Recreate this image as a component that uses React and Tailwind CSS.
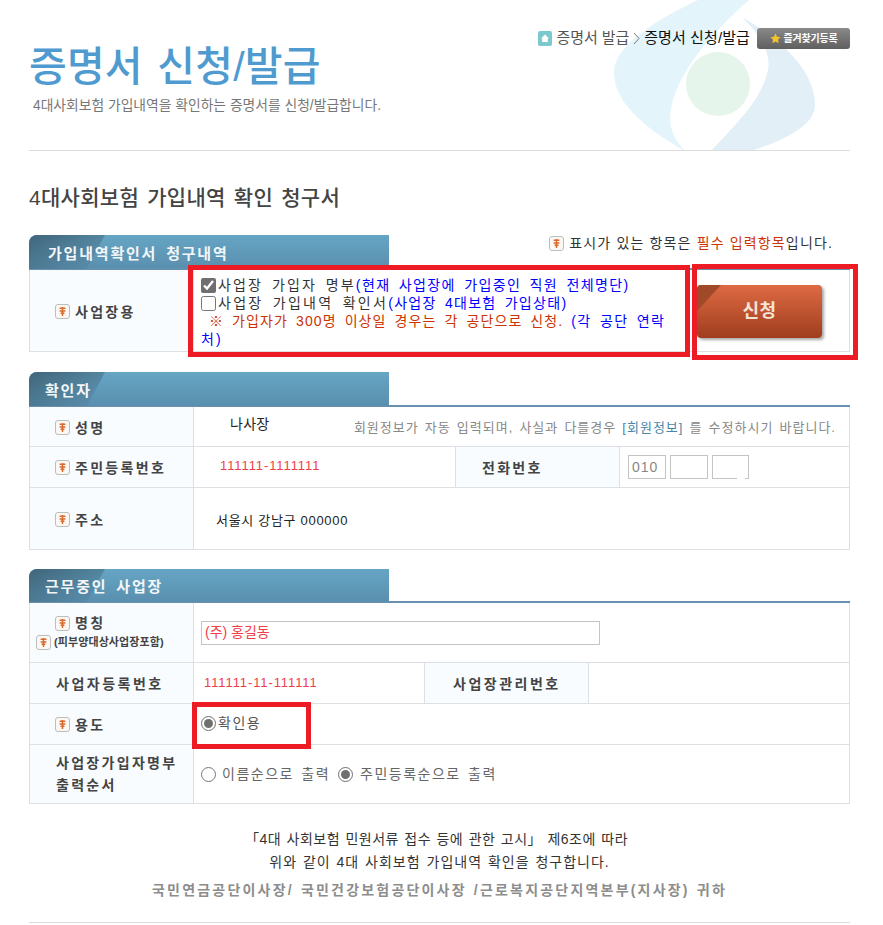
import React from "react";

function Req({ className = "" }) {
  return (
    <svg width="15" height="15" viewBox="0 0 15 15" className={`shrink-0 ${className}`}>
      <rect x="0.5" y="0.5" width="14" height="14" rx="2.5" fill="#fbf8f4" stroke="#bdbdbd" />
      <path d="M4.6 4.2 L10.4 4.2 M4.6 7 L10.4 7 M7.5 3 L7.5 12 M5.6 9.2 L9.4 9.2" stroke="#d8682c" strokeWidth="1.5" fill="none" />
    </svg>
  );
}

function Tab({ children, pl = "pl-[16px]", h = "h-[34px]" }) {
  return (
    <div className="border-b-2 border-[#6b8fae]">
      <div className={`relative w-[360px] -mb-[1px] rounded-tl-lg overflow-hidden bg-linear-to-b from-[#66a5c4] to-[#5a8fae] flex items-center pt-[4px] ${h} ${pl}`}>
        <div className="absolute left-0 top-0 w-[76px] h-full bg-linear-to-br from-[#3f6479] to-transparent [clip-path:polygon(0_0,100%_0,76%_100%,0_100%)]" />
        <span className="relative text-[15px] font-bold tracking-[1.8px] [word-spacing:3px] text-[#f2f6f8]">{children}</span>
      </div>
    </div>
  );
}

function Label({ children, req, className = "" }) {
  return (
    <div className={`bg-[#f8fcff] flex items-center pl-[25px] gap-[5px] text-[14px] font-bold tracking-[2.3px] text-[#444] ${className}`}>
      {req && <Req className="-mt-[2px]" />}
      <span>{children}</span>
    </div>
  );
}

function Radio({ checked }) {
  return <input type="radio" readOnly checked={checked} className="w-[15px] h-[15px] m-0 shrink-0 accent-[#6f6f6f]" />;
}

export default function App() {
  return (
    <div className="relative w-[883px] h-[925px] overflow-hidden bg-white pl-[29px] font-['Liberation_Sans','Noto_Sans_CJK_KR',sans-serif] text-[#333]">
      {/* watermark */}
      <svg className="absolute left-[600px] top-0" width="230" height="150" viewBox="600 0 230 150">
        <path d="M698 0 L749 0 C715 30 672 75 670 118 C670 130 676 142 684 150 L683 150 C640 125 614 100 614 72 C614 45 660 18 698 0 Z" fill="#e3f4fb" />
        <path d="M742 17 C790 45 815 75 815 105 C815 125 785 140 754 150 L712 150 C735 125 762 100 768 70 C772 50 755 30 742 17 Z" fill="#e2eff7" />
        <circle cx="718" cy="84" r="32" fill="#e6f5ec" />
      </svg>

      <div className="relative w-[821px]">
        <header className="h-[151px] border-b border-[#dcdcdc] flex justify-between">
          <div>
            <h1 className="mt-[39px] text-[41px] leading-[56px] font-medium text-[#4f9bd0] tracking-[0.2px] [word-spacing:3px] whitespace-nowrap">증명서 신청/발급</h1>
            <p className="mt-[2px] ml-[4px] text-[13.8px] leading-[18px] tracking-[0px] text-[#777] whitespace-nowrap">4대사회보험 가입내역을 확인하는 증명서를 신청/발급합니다.</p>
          </div>
          <div className="mt-[28px] h-[21px] flex items-center">
            <svg width="14" height="15" viewBox="0 0 14 15" className="mr-[5px]">
              <rect width="14" height="15" rx="2" fill="#7cc8cf" />
              <path d="M7 3.5 L11 7.5 L9.8 7.5 L9.8 11 L4.2 11 L4.2 7.5 L3 7.5 Z" fill="#fff" />
            </svg>
            <span className="text-[15px] text-[#555] tracking-[-0.1px]">증명서 발급</span>
            <svg width="7" height="13" viewBox="0 0 7 13" className="mx-[4px]"><path d="M1 1 L6 6.5 L1 12" fill="none" stroke="#777" /></svg>
            <span className="text-[15px] text-[#111] tracking-[0.1px]">증명서 신청/발급</span>
            <span className="ml-[7px] w-[93px] h-[21px] rounded-[3px] bg-linear-to-b from-[#8a8a8a] to-[#5f5f5f] flex items-center justify-center gap-[3px] text-[10px] font-bold text-white tracking-[-0.2px]">
              <svg width="11" height="11" viewBox="0 0 24 24"><path d="M12 1 L15.4 8.3 L23 9.3 L17.4 14.7 L18.9 22.5 L12 18.6 L5.1 22.5 L6.6 14.7 L1 9.3 L8.6 8.3 Z" fill="#f3c22c" /></svg>
              즐겨찾기등록
            </span>
          </div>
        </header>

        <h2 className="mt-[32px] text-[21px] leading-[30px] font-medium text-[#444] tracking-[0.3px] [word-spacing:2px]">4대사회보험 가입내역 확인 청구서</h2>

        {/* section 1 */}
        <div className="mt-[22px] relative">
          <div className="absolute right-[17px] top-0 flex items-center gap-[5px] text-[14px] leading-[16px] tracking-[1.15px] text-[#333]">
            <Req />
            <span>표시가 있는 항목은 <span className="text-[#cc3300]">필수 입력항목</span>입니다.</span>
          </div>
          <Tab pl="pl-[19px]">가입내역확인서 청구내역</Tab>
          <div className="grid grid-cols-[164px_499px_1fr] h-[82px] border-x border-b border-[#dcdfe4]">
            <Label req className="border-r border-[#dcdfe4] pt-[4px]">사업장용</Label>
            <div className="pl-[7px] pt-[6px] text-[14px] leading-[18px] tracking-[2.1px] [word-spacing:3px] whitespace-nowrap text-[#333]">
              <div className="flex items-center h-[18px]"><input type="checkbox" readOnly checked className="w-[15px] h-[15px] m-0 mr-[2px] accent-[#6f6f6f]" /><span>사업장 가입자 명부<span className="text-[#0000ff] tracking-[1.4px]">(현재 사업장에 가입중인 직원 전체명단)</span></span></div>
              <div className="flex items-center h-[18px]"><input type="checkbox" readOnly className="w-[15px] h-[15px] m-0 mr-[2px] accent-[#6f6f6f]" /><span className="tracking-[2.3px]">사업장 가입내역 확인서<span className="text-[#0000ff] tracking-[1.3px]">(사업장 4대보험 가입상태)</span></span></div>
              <div className="pl-[8px] text-[#cc3300] tracking-[1.1px]">※ 가입자가 300명 이상일 경우는 각 공단으로 신청. <span className="text-[#0000ff] tracking-[1.4px]">(각 공단 연락</span></div>
              <div className="text-[#0000ff]">처)</div>
            </div>
            <div className="pl-[4px] pt-[15px]">
              <button className="relative w-[125px] h-[53px] rounded-[4px] overflow-hidden bg-linear-to-b from-[#de6a43] to-[#9f3e1e] shadow-[2px_2px_3px_rgba(0,0,0,0.35)] text-[18px] font-bold text-[#f5e3d6] tracking-[0.5px]">
                <span className="absolute left-0 top-0 w-[24px] h-[26px] bg-[#a04a2a] [clip-path:polygon(0_0,100%_0,0_100%)]" />
                <span className="relative">신청</span>
              </button>
            </div>
          </div>
        </div>

        {/* section 2 */}
        <div className="mt-[20px]">
          <Tab>확인자</Tab>
          <div className="border-x border-b border-[#dcdfe4]">
            <div className="grid grid-cols-[164px_1fr] h-[40px] border-b border-[#dcdfe4]">
              <Label req className="border-r border-[#dcdfe4] pt-[3px]">성명</Label>
              <div className="relative flex items-center pl-[36px] pr-[13px] justify-between whitespace-nowrap">
                <span className="text-[14px] tracking-[0.3px] text-[#222] -mt-[4px]">나사장</span>
                <span className="text-[13px] tracking-[1px] [word-spacing:1.5px] text-[#888] pt-[2px]">회원정보가 자동 입력되며, 사실과 다를경우 <span className="text-[#4a86a8]">[회원정보]</span> 를 수정하시기 바랍니다.</span>
              </div>
            </div>
            <div className="grid grid-cols-[164px_262px_164px_1fr] h-[41px] border-b border-[#dcdfe4]">
              <Label req className="border-r border-[#dcdfe4] pt-[2px]">주민등록번호</Label>
              <div className="flex items-center pl-[26px] pb-[2px] text-[13px] tracking-[0.9px] text-[#ef3e4a] border-r border-[#dcdfe4]">111111-1111111</div>
              <div className="bg-[#f8fcff] border-r border-[#dcdfe4] flex items-center pl-[26px] pt-[2px] text-[14px] font-bold tracking-[2.3px] text-[#444]">전화번호</div>
              <div className="flex items-center pl-[8px] gap-[4px] text-[14px] tracking-[1px] text-[#888]">
                <div className="w-[38px] h-[24px] border border-[#c4c4c4] flex items-center pl-[3px]">010</div>
                <div className="w-[38px] h-[24px] border border-[#c4c4c4]" />
                <div className="relative w-[37px] h-[24px] border border-[#c4c4c4]">
                  <span className="absolute right-[3px] -bottom-[1px] w-[8px] h-[1px] bg-white" />
                </div>
              </div>
            </div>
            <div className="grid grid-cols-[164px_1fr] h-[61px]">
              <Label req className="border-r border-[#dcdfe4] pt-[4px]">주소</Label>
              <div className="flex items-center pl-[22px] pt-[5px] text-[13px] tracking-[0.7px] text-[#222]">서울시 강남구 000000</div>
            </div>
          </div>
        </div>

        {/* section 3 */}
        <div className="mt-[19px]">
          <Tab h="h-[33px]">근무중인 사업장</Tab>
          <div className="border-x border-b border-[#dcdfe4]">
            <div className="grid grid-cols-[164px_1fr] h-[60px] border-b border-[#dcdfe4]">
              <div className="bg-[#f8fcff] border-r border-[#dcdfe4] flex flex-col justify-center pl-[6px] text-[#444] font-bold">
                <div className="flex items-center gap-[5px] pl-[19px] text-[14px] tracking-[2.3px] h-[20px]"><Req />명칭</div>
                <div className="flex items-center gap-[3px] text-[11px] tracking-[0.1px] h-[18px] whitespace-nowrap"><Req />(피부양대상사업장포함)</div>
              </div>
              <div className="flex items-center pl-[7px]">
                <div className="w-[399px] h-[24px] border border-[#c4c4c4] flex items-center pl-[3px] text-[14px] text-[#ef3e4a]">(주) 홍길동</div>
              </div>
            </div>
            <div className="grid grid-cols-[164px_231px_164px_1fr] h-[41px] border-b border-[#dcdfe4]">
              <div className="bg-[#f8fcff] border-r border-[#dcdfe4] flex items-center pl-[26px] pt-[2px] text-[14px] font-bold tracking-[2.5px] text-[#444]">사업자등록번호</div>
              <div className="flex items-center pl-[10px] text-[13px] tracking-[0.9px] text-[#ef3e4a] border-r border-[#dcdfe4] -mt-[1px]">111111-11-111111</div>
              <div className="bg-[#f8fcff] border-r border-[#dcdfe4] flex items-center pl-[28px] pt-[2px] text-[14px] font-bold tracking-[2.5px] text-[#444]">사업장관리번호</div>
              <div />
            </div>
            <div className="grid grid-cols-[164px_1fr] h-[41px] border-b border-[#dcdfe4]">
              <Label req className="border-r border-[#dcdfe4] pt-[2px]">용도</Label>
              <div className="flex items-center pl-[7px] gap-[2px] text-[14px] tracking-[1.5px] text-[#555] -mt-[2px]"><Radio checked />확인용</div>
            </div>
            <div className="grid grid-cols-[164px_1fr] h-[58px]">
              <div className="bg-[#f8fcff] border-r border-[#dcdfe4] flex items-center pl-[26px] text-[14px] leading-[22px] font-bold tracking-[2.3px] text-[#444]"><span>사업장가입자명부<br />출력순서</span></div>
              <div className="flex items-center pl-[7px] text-[14px] tracking-[1.5px] [word-spacing:2px] text-[#666]">
                <Radio /><span className="ml-[6px]">이름순으로 출력</span>
                <span className="ml-[8px] flex items-center"><Radio checked /><span className="ml-[7px]">주민등록순으로 출력</span></span>
              </div>
            </div>
          </div>
        </div>

        {/* footer text */}
        <div className="mt-[24px] text-center text-[14px] leading-[23px] [word-spacing:1px] text-[#333]">
          <p className="tracking-[0.5px] pr-[6px]">「4대 사회보험 민원서류 접수 등에 관한 고시」 제6조에 따라</p>
          <p className="tracking-[1px]">위와 같이 4대 사회보험 가입내역 확인을 청구합니다.</p>
          <p className="mt-[5px] text-[14px] font-bold tracking-[2.2px] text-[#8d8d8d]">국민연금공단이사장/ 국민건강보험공단이사장 /근로복지공단지역본부(지사장) 귀하</p>
        </div>
        <div className="mt-[20px] border-t border-[#dcdcdc]" />
      </div>

      {/* red annotation frames */}
      <div className="absolute left-[188px] top-[265px] w-[502px] h-[92px] border-[5px] border-[#ed1c24]" />
      <div className="absolute left-[692px] top-[264px] w-[166px] h-[96px] border-[5px] border-[#ed1c24]" />
      <div className="absolute left-[192px] top-[702px] w-[119px] h-[47px] border-[5px] border-[#ed1c24]" />
    </div>
  );
}
